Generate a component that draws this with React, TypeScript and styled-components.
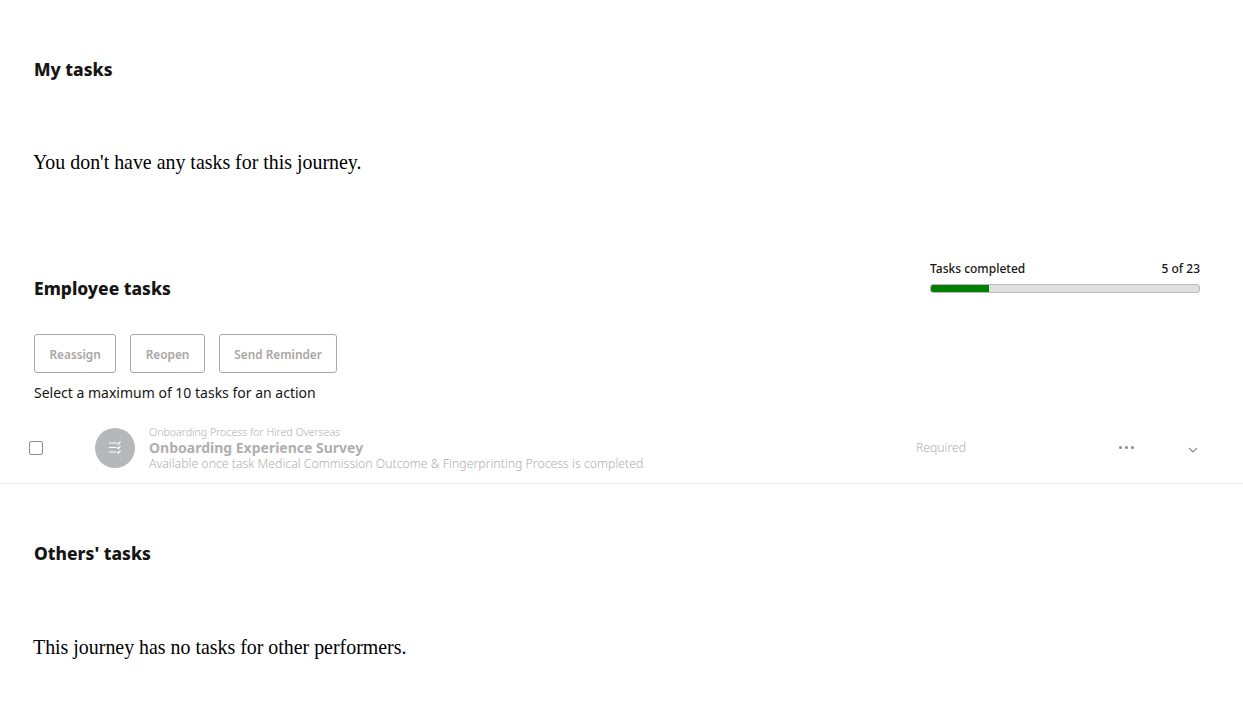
import { createGlobalStyle } from 'styled-components';
import styled from 'styled-components';

const GlobalStyle = createGlobalStyle`
  html, body {
    margin: 0;
    padding: 0;
    background: #fff;
  }
  body {
    font-family: "Noto Sans", "Open Sans", sans-serif;
    color: #161513;
  }
`;

function ChecklistIcon() {
  return (
    <svg width="14" height="13" viewBox="0 0 14 13" fill="none" stroke="#fff" strokeWidth="1.2">
      <path d="M1 2h7.5M1 6.5h7.5M1 11h7.5" />
      <path d="M9.5 2l1 1 2-2.3M9.5 6.5l1 1 2-2.3M9.5 11l1 1 2-2.3" />
    </svg>
  );
}

export default function App() {
  return (
    <Page>
      <GlobalStyle />
      <MyTasks>
        <Heading>My tasks</Heading>
        <EmptyText>You don't have any tasks for this journey.</EmptyText>
      </MyTasks>

      <EmployeeHeader>
        <Heading>Employee tasks</Heading>
        <Progress>
          <ProgressLabels>
            <span>Tasks completed</span>
            <span>5 of 23</span>
          </ProgressLabels>
          <Track>
            <Fill style={{ width: `${(5 / 23) * 100}%` }} />
          </Track>
        </Progress>
      </EmployeeHeader>

      <Actions>
        <ActionButton>Reassign</ActionButton>
        <ActionButton>Reopen</ActionButton>
        <ActionButton>Send Reminder</ActionButton>
      </Actions>
      <Hint>Select a maximum of 10 tasks for an action</Hint>

      <TaskRow>
        <CheckBox />
        <Avatar>
          <ChecklistIcon />
        </Avatar>
        <TaskInfo>
          <TaskParent>Onboarding Process for Hired Overseas</TaskParent>
          <TaskName>Onboarding Experience Survey</TaskName>
          <TaskNote>Available once task Medical Commission Outcome &amp; Fingerprinting Process is completed</TaskNote>
        </TaskInfo>
        <TaskStatus>Required</TaskStatus>
        <MoreDots>
          <i />
          <i />
          <i />
        </MoreDots>
        <Chevron width="10" height="6" viewBox="0 0 10 6" fill="none" stroke="#8a8a88" strokeWidth="1.2">
          <path d="M1 1l4 4 4-4" />
        </Chevron>
      </TaskRow>

      <OthersTasks>
        <Heading>Others' tasks</Heading>
        <EmptyText>This journey has no tasks for other performers.</EmptyText>
      </OthersTasks>
    </Page>
  );
}

const Page = styled.div`
  width: 1243px;
  height: 703px;
  overflow: hidden;
  display: flex;
  flex-direction: column;
`;
const MyTasks = styled.section`
  display: flex;
  flex-direction: column;
  gap: 69px;
  padding: 57px 34px 0;
`;
const OthersTasks = styled(MyTasks)`
  gap: 70px;
`;
const Heading = styled.h2`
  margin: 0;
  font-size: 17.4px;
  line-height: 24px;
  font-weight: 800;
  color: #161513;
`;
const EmptyText = styled.p`
  margin: 0 0 0 -1px;
  font-family: "Liberation Serif", Georgia, serif;
  font-size: 19.9px;
  line-height: 24px;
  color: #000;
`;
const EmployeeHeader = styled.div`
  display: flex;
  justify-content: space-between;
  align-items: flex-end;
  margin-top: 86px;
  padding: 0 43px 0 34px;
  height: 40px;
`;
const Progress = styled.div`
  width: 270px;
  margin-bottom: 7px;
  display: flex;
  flex-direction: column;
  gap: 7px;
`;
const ProgressLabels = styled.div`
  display: flex;
  justify-content: space-between;
  font-size: 12px;
  line-height: 16px;
  font-weight: 500;
`;
const Track = styled.div`
  height: 9px;
  box-sizing: border-box;
  border: 1px solid #b9b9b7;
  border-radius: 3px;
  background: #dfdfdd;
  overflow: hidden;
`;
const Fill = styled.div`
  height: 100%;
  background: #008000;
`;
const Actions = styled.div`
  display: flex;
  gap: 14px;
  margin-top: 34px;
  padding: 0 34px;
`;
const ActionButton = styled.button`
  height: 39px;
  padding: 0 14.5px;
  border: 1px solid #a9a8a6;
  border-radius: 3px;
  background: #fff;
  font-family: inherit;
  font-size: 11.8px;
  font-weight: 600;
  color: #a8a6a3;
`;
const Hint = styled.div`
  margin-top: 10px;
  padding: 0 34px;
  font-size: 14px;
  line-height: 20px;
`;
const TaskRow = styled.div`
  display: flex;
  align-items: center;
  height: 68px;
  margin-top: 13px;
  box-sizing: border-box;
  border-bottom: 1px solid #e8e8e7;
  padding: 0 0 4px 29px;
`;
const CheckBox = styled.span`
  width: 14px;
  height: 14px;
  box-sizing: border-box;
  border: 1px solid #8f8e8c;
  border-radius: 2px;
`;
const Avatar = styled.div`
  width: 40px;
  height: 40px;
  margin-left: 52px;
  border-radius: 50%;
  background: #b5b8bb;
  display: flex;
  align-items: center;
  justify-content: center;
`;
const TaskInfo = styled.div`
  width: 767px;
  margin-left: 14px;
  display: flex;
  flex-direction: column;
`;
const TaskParent = styled.div`
  font-size: 10.6px;
  line-height: 16px;
  font-weight: 300;
  color: #b0afad;
`;
const TaskName = styled.div`
  font-size: 14px;
  line-height: 16px;
  font-weight: 700;
  color: #b0afad;
`;
const TaskNote = styled.div`
  font-size: 12.3px;
  line-height: 15px;
  font-weight: 300;
  color: #b0afad;
`;
const TaskStatus = styled.div`
  width: 203px;
  font-size: 12.2px;
  font-weight: 300;
  color: #b0afad;
`;
const MoreDots = styled.div`
  display: flex;
  gap: 3px;
  i {
    width: 3px;
    height: 3px;
    border-radius: 50%;
    background: #8a8a88;
  }
`;
const Chevron = styled.svg`
  margin-left: 54px;
  margin-top: 4px;
`;
